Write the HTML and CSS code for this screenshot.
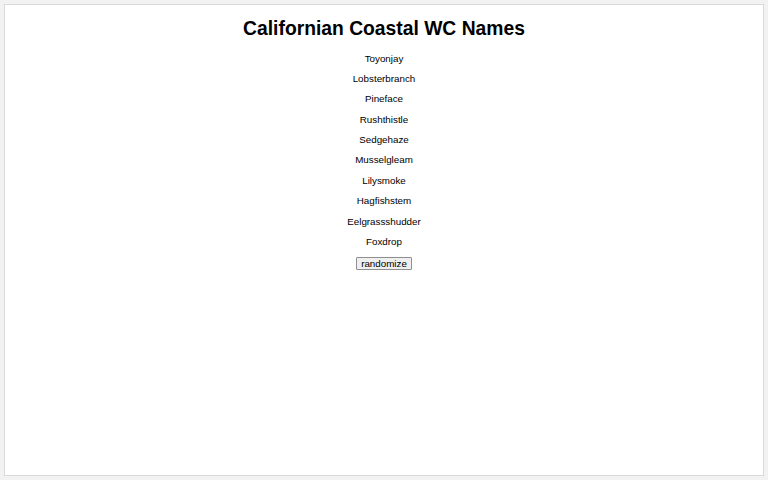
FILE: index.html
```html
<!DOCTYPE html>
<html lang="en">
<head>
<meta charset="utf-8">
<title>Californian Coastal WC Names</title>
<link rel="stylesheet" href="styles.css">
</head>
<body>
<main class="panel">
  <h1 class="title">Californian Coastal WC Names</h1>
  <ul class="names">
    <li>Toyonjay</li>
    <li>Lobsterbranch</li>
    <li>Pineface</li>
    <li>Rushthistle</li>
    <li>Sedgehaze</li>
    <li>Musselgleam</li>
    <li>Lilysmoke</li>
    <li>Hagfishstem</li>
    <li>Eelgrassshudder</li>
    <li>Foxdrop</li>
  </ul>
  <button class="shuffle" type="button">randomize</button>
</main>
</body>
</html>
```

FILE: styles.css
```css
html, body {
  margin: 0;
  height: 100%;
}

body {
  background: #f2f2f2;
  padding: 4px;
  box-sizing: border-box;
  font-family: "Liberation Sans", Arial, sans-serif;
  color: #000;
}

.panel {
  box-sizing: border-box;
  height: 100%;
  background: #fff;
  border: 1px solid #d9d9d9;
  display: flex;
  flex-direction: column;
  align-items: center;
  padding-top: 12px;
}

.title {
  margin: 0;
  font-size: 19.3px;
  font-weight: bold;
  line-height: 23px;
}

.names {
  list-style: none;
  margin: 11.5px 0 0;
  padding: 0;
  display: flex;
  flex-direction: column;
  align-items: center;
  gap: 7.4px;
  font-size: 9.8px;
  line-height: 13px;
}

.shuffle {
  margin-top: 9px;
  font-family: "Liberation Sans", Arial, sans-serif;
  font-size: 9.8px;
  line-height: 11px;
  padding: 0 4px;
  background: #efefef;
  border: 1px solid #8f8f8f;
  border-radius: 1px;
  color: #000;
}
```
